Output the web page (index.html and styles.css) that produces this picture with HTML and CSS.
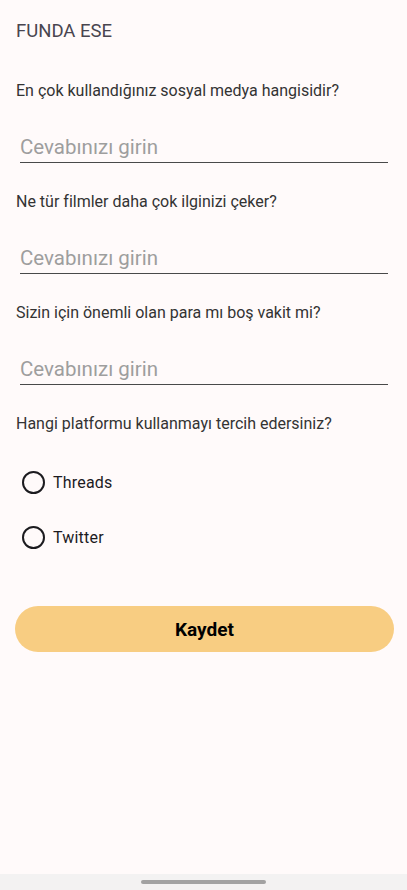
FILE: index.html
```html
<!DOCTYPE html>
<html lang="tr">
<head>
<meta charset="utf-8">
<link rel="stylesheet" href="styles.css">
</head>
<body>
<div class="screen">
  <main class="content">
    <h1 class="title">FUNDA ESE</h1>
    <p class="question q-first">En çok kullandığınız sosyal medya hangisidir?</p>
    <div class="field field-first"><span class="placeholder">Cevabınızı girin</span></div>
    <p class="question">Ne tür filmler daha çok ilginizi çeker?</p>
    <div class="field"><span class="placeholder">Cevabınızı girin</span></div>
    <p class="question">Sizin için önemli olan para mı boş vakit mi?</p>
    <div class="field"><span class="placeholder">Cevabınızı girin</span></div>
    <p class="question">Hangi platformu kullanmayı tercih edersiniz?</p>
    <div class="radios">
      <label class="radio"><span class="circle"></span><span class="radio-label">Threads</span></label>
      <label class="radio"><span class="circle"></span><span class="radio-label">Twitter</span></label>
    </div>
    <button class="save">Kaydet</button>
  </main>
  <div class="navbar"><span class="handle"></span></div>
</div>
</body>
</html>
```
FILE: styles.css
```css
html, body {
  margin: 0;
  padding: 0;
  height: 100%;
}
body {
  background: #fffafa;
  font-family: Roboto, "Noto Sans", sans-serif;
}
.screen {
  height: 890px;
  display: flex;
  flex-direction: column;
}
.content {
  flex: 1;
  display: flex;
  flex-direction: column;
  padding: 0 14px 0 16px;
}
.title {
  margin: 20px 0 0;
  font-size: 18.5px;
  font-weight: 400;
  line-height: 22px;
  color: #49454f;
}
.question {
  margin: 28px 0 0;
  font-size: 16px;
  line-height: 22px;
  color: #333;
}
.q-first {
  margin-top: 38px;
}
.field {
  margin: 22px 5px 0 4px;
  height: 38px;
  border-bottom: 1.5px solid #494949;
  display: flex;
  align-items: flex-end;
  box-sizing: content-box;
}
.placeholder {
  font-size: 20.5px;
  color: #9e9e9e;
  line-height: 24px;
  margin-bottom: 3px;
}
.radios {
  margin-top: 20px;
  display: flex;
  flex-direction: column;
}
.radio {
  height: 55px;
  display: flex;
  align-items: center;
  padding-left: 6px;
}
.circle {
  width: 19px;
  height: 19px;
  border: 2px solid #1c1b1f;
  border-radius: 50%;
}
.radio-label {
  margin-left: 8px;
  font-size: 16px;
  color: #1c1b1f;
  letter-spacing: 0.2px;
}
.save {
  margin-top: 41px;
  margin-right: -1px;
  margin-left: -1px;
  height: 46px;
  border: none;
  border-radius: 23px;
  background: #f8cd82;
  font-family: Roboto, sans-serif;
  font-weight: 700;
  font-size: 19px;
  color: #000;
}
.navbar {
  height: 16px;
  background: #f3f2f2;
  display: flex;
  justify-content: center;
  align-items: center;
}
.handle {
  width: 125px;
  height: 4px;
  border-radius: 2px;
  background: #a2a2a2;
}
```
